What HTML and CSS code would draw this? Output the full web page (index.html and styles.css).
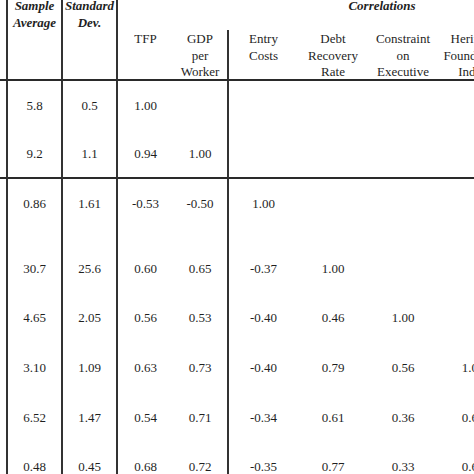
FILE: index.html
```html
<!DOCTYPE html>
<html>
<head>
<meta charset="utf-8">
<link rel="stylesheet" href="styles.css">
</head>
<body>
<div class="table">
  <div class="cell vr hb span-rows"></div>
  <div class="cell vr hb span-rows head"><div class="bi">Sample<br>Average</div></div>
  <div class="cell vr hb span-rows head"><div class="bi">Standard<br>Dev.</div></div>
  <div class="cell span-2"></div>
  <div class="cell span-4 head corr"><div class="bi">Correlations</div></div>

  <div class="cell hb sub">TFP</div>
  <div class="cell hb vr sub">GDP<br>per<br>Worker</div>
  <div class="cell hb sub">Entry<br>Costs</div>
  <div class="cell hb sub">Debt<br>Recovery<br>Rate</div>
  <div class="cell hb sub">Constraint<br>on<br>Executive</div>
  <div class="cell hb sub">Heritage<br>Foundation<br>Index</div>

  <div class="cell vr"></div><div class="cell vr d">5.8</div><div class="cell vr d">0.5</div><div class="cell d">1.00</div><div class="cell vr d"></div><div class="cell d"></div><div class="cell d"></div><div class="cell d"></div><div class="cell d"></div>

  <div class="cell vr hb"></div><div class="cell vr hb d">9.2</div><div class="cell vr hb d">1.1</div><div class="cell hb d">0.94</div><div class="cell vr hb d">1.00</div><div class="cell hb d"></div><div class="cell hb d"></div><div class="cell hb d"></div><div class="cell hb d"></div>

  <div class="cell vr"></div><div class="cell vr d">0.86</div><div class="cell vr d">1.61</div><div class="cell d">-0.53</div><div class="cell vr d">-0.50</div><div class="cell d">1.00</div><div class="cell d"></div><div class="cell d"></div><div class="cell d"></div>

  <div class="cell vr"></div><div class="cell vr d">30.7</div><div class="cell vr d">25.6</div><div class="cell d">0.60</div><div class="cell vr d">0.65</div><div class="cell d">-0.37</div><div class="cell d">1.00</div><div class="cell d"></div><div class="cell d"></div>

  <div class="cell vr"></div><div class="cell vr d">4.65</div><div class="cell vr d">2.05</div><div class="cell d">0.56</div><div class="cell vr d">0.53</div><div class="cell d">-0.40</div><div class="cell d">0.46</div><div class="cell d">1.00</div><div class="cell d"></div>

  <div class="cell vr"></div><div class="cell vr d">3.10</div><div class="cell vr d">1.09</div><div class="cell d">0.63</div><div class="cell vr d">0.73</div><div class="cell d">-0.40</div><div class="cell d">0.79</div><div class="cell d">0.56</div><div class="cell d">1.00</div>

  <div class="cell vr"></div><div class="cell vr d">6.52</div><div class="cell vr d">1.47</div><div class="cell d">0.54</div><div class="cell vr d">0.71</div><div class="cell d">-0.34</div><div class="cell d">0.61</div><div class="cell d">0.36</div><div class="cell d">0.64</div>

  <div class="cell vr"></div><div class="cell vr d">0.48</div><div class="cell vr d">0.45</div><div class="cell d">0.68</div><div class="cell vr d">0.72</div><div class="cell d">-0.35</div><div class="cell d">0.77</div><div class="cell d">0.33</div><div class="cell d">0.62</div>
</div>
</body>
</html>
```

FILE: styles.css
```css
html, body {
  margin: 0;
  padding: 0;
  background: #ffffff;
  overflow: hidden;
  width: 474px;
  height: 474px;
}

.table {
  display: grid;
  grid-template-columns: 8px 55px 55px 55px 56px 69px 70px 70px 70px;
  grid-template-rows: 30px 51px 48px 50px 65px 49px 50px 50px 49px 50px;
  width: 508px;
  font-family: "Liberation Serif", "Times New Roman", serif;
  font-size: 13px;
  color: #1f1f1f;
}

.cell {
  box-sizing: border-box;
  text-align: center;
  min-width: 0;
}

.vr {
  border-right: 2px solid #333333;
}

.hb {
  border-bottom: 2px solid #2a2a2a;
}

.span-rows {
  grid-row: span 2;
}

.span-2 {
  grid-column: span 2;
}

.span-4 {
  grid-column: span 4;
}

.head {
  line-height: 17px;
}

.bi {
  font-weight: bold;
  font-style: italic;
  margin-top: -3px;
}

.corr {
  padding-left: 27px;
}

.sub {
  line-height: 16.5px;
  padding-top: 1px;
  white-space: nowrap;
}

.d {
  line-height: 16px;
  padding-top: 17px;
  white-space: nowrap;
}
```
